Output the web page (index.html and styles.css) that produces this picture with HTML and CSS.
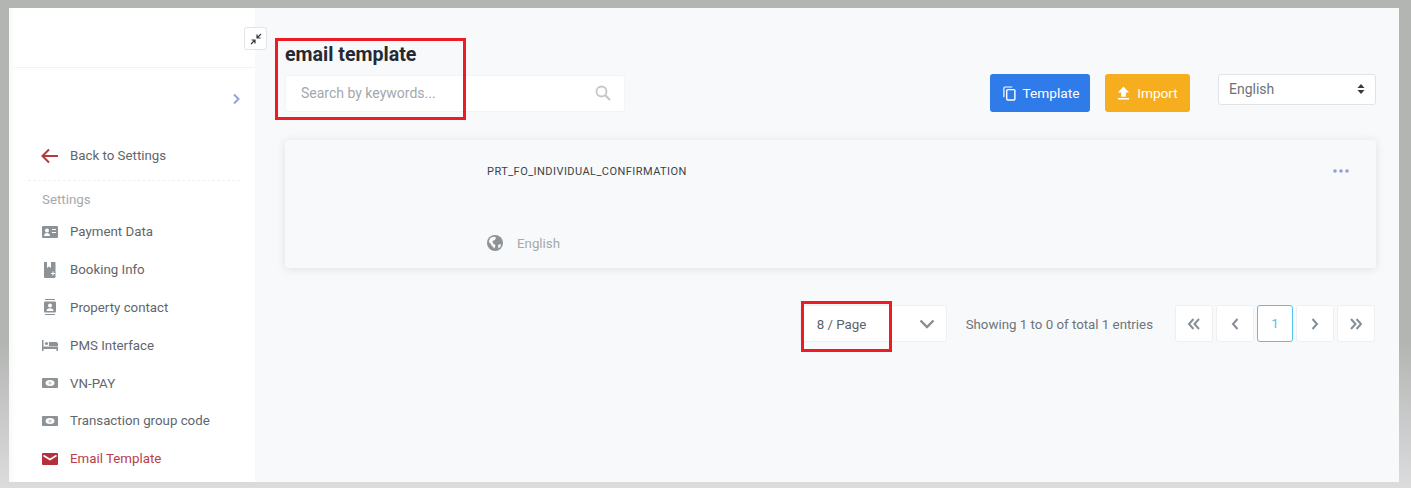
FILE: index.html
```html
<!DOCTYPE html>
<html lang="en">
<head>
<meta charset="utf-8">
<title>email template</title>
<link rel="stylesheet" href="styles.css">
</head>
<body>
<div class="frame">
  <aside class="sidebar">
    <div class="brand"></div>
    <div class="toggle-row">
      <svg class="chev" viewBox="0 0 10 12" width="10" height="12"><path d="M3 1.500 7.500 6 3 10.500" fill="none" stroke="#8fa3dc" stroke-width="2"/></svg>
    </div>
    <nav class="nav">
      <a class="back">
        <svg viewBox="0 0 18 16" width="18" height="16"><path d="M18 8H2.500M9 1.500 2.500 8 9 14.500" fill="none" stroke="#b5383a" stroke-width="2"/></svg>
        <span>Back to Settings</span>
      </a>
      <div class="section">Settings</div>
      <a class="item">
        <svg viewBox="0 0 16 12" width="16" height="12"><path fill="#8c9296" d="M1 0h14a1 1 0 0 1 1 1v10a1 1 0 0 1-1 1H1a1 1 0 0 1-1-1V1a1 1 0 0 1 1-1z"/><circle cx="5" cy="4.500" r="2" fill="#fff"/><path fill="#fff" d="M2 10c0-2 1.500-3 3-3s3 1 3 3zM10 3h4v1h-4zM10 6h4v1h-4z"/></svg>
        <span>Payment Data</span>
      </a>
      <a class="item">
        <svg viewBox="0 0 16 16" width="16" height="16"><path fill="#8c9296" d="M2 0h3v6l2-1.500L9 6V0h3.500a1 1 0 0 1 1 1v14a1 1 0 0 1-1 1H3a1 1 0 0 1-1-1z"/><path fill="#fff" d="M9 11h1.500V9.500h1V11H13v1h-1.500v1.500h-1V12H9z"/></svg>
        <span>Booking Info</span>
      </a>
      <a class="item">
        <svg viewBox="0 0 16 16" width="16" height="16"><path fill="#8c9296" d="M3 0h10v1H3zM3 15h10v1H3z"/><rect x="2" y="2.500" width="12" height="11" rx="1" fill="#8c9296"/><circle cx="8" cy="6.500" r="2" fill="#fff"/><path fill="#fff" d="M4.500 12c0-2 1.500-2.800 3.500-2.800s3.500.8 3.500 2.800z"/></svg>
        <span>Property contact</span>
      </a>
      <a class="item">
        <svg viewBox="0 0 16 12" width="16" height="12"><path fill="#8c9296" d="M0 1h1.500v6.500H16V12h-1.500v-2h-13v2H0z"/><circle cx="4.500" cy="4.500" r="1.600" fill="#8c9296"/><path fill="#8c9296" d="M7 3h7a2 2 0 0 1 2 2v2H7z"/></svg>
        <span>PMS Interface</span>
      </a>
      <a class="item">
        <svg viewBox="0 0 16 12" width="16" height="12"><rect y="1" width="16" height="10" rx="1" fill="#8c9296"/><ellipse cx="8" cy="6" rx="4.500" ry="3" fill="#fff"/><ellipse cx="8" cy="6" rx="1.600" ry="1.600" fill="#c9cccf"/></svg>
        <span>VN-PAY</span>
      </a>
      <a class="item">
        <svg viewBox="0 0 16 12" width="16" height="12"><rect y="1" width="16" height="10" rx="1" fill="#8c9296"/><ellipse cx="8" cy="6" rx="4.500" ry="3" fill="#fff"/><ellipse cx="8" cy="6" rx="1.600" ry="1.600" fill="#c9cccf"/></svg>
        <span>Transaction group code</span>
      </a>
      <a class="item active">
        <svg viewBox="0 0 16 12" width="16" height="12"><rect width="16" height="12" rx="1" fill="#b5303a"/><path d="M1.500 2.500 8 6.500l6.500-4" fill="none" stroke="#fff" stroke-width="1.500"/></svg>
        <span>Email Template</span>
      </a>
    </nav>
  </aside>

  <button class="collapse" type="button" aria-label="Collapse">
    <svg viewBox="0 0 12 12" width="12" height="12"><path d="M11 1 7.500 4.500M7 1.500V5h3.500M1 11l3.500-3.500M5 10.500V7H1.500" fill="none" stroke="#333a44" stroke-width="1.200"/></svg>
  </button>

  <main class="main">
    <h1 class="title">email template</h1>
    <div class="toolbar">
      <div class="search">
        <span class="placeholder">Search by keywords...</span>
        <svg viewBox="0 0 16 16" width="16" height="16"><circle cx="6.500" cy="6.500" r="5" fill="none" stroke="#c4c7ca" stroke-width="1.800"/><path d="m10.500 10.500 4.500 4.500" stroke="#c4c7ca" stroke-width="2.200"/></svg>
      </div>
      <div class="actions">
        <a class="btn btn-blue">
          <svg viewBox="0 0 14 16" width="13" height="15"><path d="M10 1H2a1 1 0 0 0-1 1v10" fill="none" stroke="#fff" stroke-width="1.300"/><rect x="4" y="3.800" width="8.800" height="11.200" rx="1" fill="none" stroke="#fff" stroke-width="1.500"/></svg>
          <span>Template</span>
        </a>
        <a class="btn btn-amber">
          <svg viewBox="0 0 14 14" width="13" height="14"><path fill="#fff" d="M7 0l6 6.500H9.500V11h-5V6.500H1zM1 12.500h12V14H1z"/></svg>
          <span>Import</span>
        </a>
      </div>
      <div class="lang">
        <span>English</span>
        <svg viewBox="0 0 8 12" width="8" height="12"><path fill="#343a40" d="M4 1l3.500 4h-7zM4 11 .5 7h7z"/></svg>
      </div>
    </div>

    <section class="card">
      <div class="card-top">
        <span class="code">PRT_FO_INDIVIDUAL_CONFIRMATION</span>
        <svg class="dots" viewBox="0 0 16 4" width="16" height="4"><circle cx="2" cy="2" r="1.800" fill="#8f9fdc"/><circle cx="8" cy="2" r="1.800" fill="#8f9fdc"/><circle cx="14" cy="2" r="1.800" fill="#8f9fdc"/></svg>
      </div>
      <div class="card-lang">
        <svg viewBox="0 0 16 16" width="16" height="16"><circle cx="8" cy="8" r="8" fill="#8c9296"/><path fill="#f8f9fb" d="M4 2.500c2-1 4-1 5 0L8 5 5.500 6 6 8.500 8.500 10l-1 3.500L5 11 3 8 1.800 7C2 5 3 3.500 4 2.500zM11 10l3-1c0 2-1 3.500-2.500 4.500z"/></svg>
        <span>English</span>
      </div>
    </section>

    <div class="pager">
      <div class="page-size">
        <span>8 / Page</span>
        <svg viewBox="0 0 16 10" width="16" height="10"><path d="M1.500 1.500 8 8l6.500-6.500" fill="none" stroke="#868e96" stroke-width="2.400"/></svg>
      </div>
      <span class="summary">Showing 1 to 0 of total 1 entries</span>
      <div class="pages">
        <a class="pg wide"><svg viewBox="0 0 14 12" width="14" height="12"><path d="M6.500 1 2 6l4.500 5M12 1 7.500 6l4.500 5" fill="none" stroke="#868e96" stroke-width="2"/></svg></a>
        <a class="pg wide"><svg viewBox="0 0 8 12" width="8" height="12"><path d="M6.500 1 2 6l4.500 5" fill="none" stroke="#868e96" stroke-width="2"/></svg></a>
        <a class="pg current">1</a>
        <a class="pg wide"><svg viewBox="0 0 8 12" width="8" height="12"><path d="M1.500 1 6 6l-4.500 5" fill="none" stroke="#868e96" stroke-width="2"/></svg></a>
        <a class="pg wide"><svg viewBox="0 0 14 12" width="14" height="12"><path d="M2 1l4.500 5L2 11M7.500 1 12 6l-4.500 5" fill="none" stroke="#868e96" stroke-width="2"/></svg></a>
      </div>
    </div>
  </main>

  <div class="mark mark-title"></div>
  <div class="mark mark-size"></div>
</div>
</body>
</html>
```
FILE: styles.css
```css
* { box-sizing: border-box; }
html, body { height: 100%; }
body {
  margin: 0;
  padding: 8px 12px 6px 9px;
  background: linear-gradient(#b3b5b3 0, #b3b5b3 70%, #dcdcdc 100%);
  font-family: "Roboto", "Liberation Sans", sans-serif;
  font-size: 13.300px;
  color: #5f666d;
  overflow: hidden;
}
.frame {
  position: relative;
  display: flex;
  height: 474px;
  background: #f8f9fb;
  overflow: hidden;
}
.sidebar {
  width: 246px;
  flex: none;
  background: linear-gradient(90deg, #f7f8f8 0, #fff 6px);
}
.brand {
  height: 60px;
  margin-left: 5px;
  border-bottom: 1px solid #f1f2f4;
}
.toggle-row {
  height: 62px;
  display: flex;
  justify-content: flex-end;
  align-items: center;
  padding-right: 14px;
}
.chev { display: block; }
.nav { padding: 0 15px 0 33px; }
.back {
  display: flex;
  align-items: center;
  gap: 12px;
  height: 46px;
  margin: 5px 0 0 -14px;
  padding: 0 0 4px 12px;
  border-bottom: 1px dashed #eef0f2;
}
.section {
  color: #a4a9ae;
  margin-top: 10px;
  line-height: 18px;
}
.item {
  display: flex;
  align-items: center;
  gap: 12px;
  height: 37.800px;
}
.item svg { width: 16px; flex: none; }
.item.active { color: #b9404a; }
.section + .item { margin-top: 4px; }
.collapse {
  position: absolute;
  left: 235px;
  top: 19px;
  width: 23px;
  height: 23px;
  padding: 0;
  display: flex;
  align-items: center;
  justify-content: center;
  background: #fff;
  border: 1px solid #e2e4e6;
  border-radius: 3px;
}
.main {
  flex: 1;
  min-width: 0;
  padding: 0 23px 0 30px;
}
.title {
  margin: 36px 0 0;
  font-size: 19.600px;
  font-weight: 700;
  line-height: 22px;
  color: #252a31;
}
.toolbar {
  display: flex;
  align-items: flex-start;
  margin-top: 8px;
}
.search {
  width: 340px;
  height: 37px;
  display: flex;
  align-items: center;
  justify-content: space-between;
  padding: 0 13px 2px 15px;
  margin-top: 1px;
  background: #fff;
  border: 1px solid #f3f4f6;
  border-radius: 3px;
}
.placeholder { color: #a3a8ad; font-size: 14px; }
.actions {
  display: flex;
  gap: 15px;
  margin-left: 365px;
}
.btn {
  display: flex;
  align-items: center;
  justify-content: center;
  gap: 7px;
  height: 38px;
  border-radius: 3px;
  color: #fff;
  font-size: 13.700px;
}
.btn-blue { width: 100px; background: #2f7bea; padding-left: 2px; }
.btn-amber { width: 85px; background: #f6ae1e; }
.lang {
  width: 158px;
  height: 31px;
  margin-left: 28px;
  display: flex;
  align-items: center;
  justify-content: space-between;
  padding: 0 10px 2px;
  background: #fff;
  border: 1px solid #dfe2e6;
  border-radius: 3px;
  font-size: 14px;
  color: #6c737a;
}
.card {
  height: 128px;
  margin-top: 28px;
  display: flex;
  flex-direction: column;
  justify-content: space-between;
  padding: 23px 27px 16px 202px;
  background: #f8f9fb;
  border-radius: 3px;
  box-shadow: 0 1px 8px rgba(60, 70, 90, .14);
}
.card-top {
  display: flex;
  align-items: center;
  justify-content: space-between;
  height: 16px;
}
.code { font-size: 11px; color: #3c4248; letter-spacing: .45px; }
.card-lang {
  display: flex;
  align-items: center;
  gap: 14px;
  color: #a4a9ae;
  height: 18px;
}
.pager {
  display: flex;
  align-items: center;
  justify-content: flex-end;
  margin-top: 37px;
  padding-right: 1px;
}
.page-size {
  width: 147px;
  height: 37px;
  display: flex;
  align-items: center;
  justify-content: space-between;
  padding: 1px 11px 0 16px;
  background: #fff;
  border: 1px solid #edeff1;
  border-radius: 3px;
  color: #5a6168;
}
.summary {
  margin-left: 19px;
  padding-top: 2px;
  color: #6d747b;
}
.pages {
  display: flex;
  gap: 3px;
  margin-left: 22px;
}
.pg {
  width: 38px;
  height: 37px;
  display: flex;
  align-items: center;
  justify-content: center;
  background: #fff;
  border: 1px solid #edeff1;
  border-radius: 3px;
}
.pg.current {
  width: 36px;
  border-color: #4fc3f0;
  color: #4fc3f0;
}
.mark {
  position: absolute;
  border: 3.500px solid #ed1c24;
  pointer-events: none;
}
.mark-title { left: 266px; top: 30px; width: 191px; height: 82px; }
.mark-size { left: 792px; top: 293px; width: 91px; height: 51px; }
```
